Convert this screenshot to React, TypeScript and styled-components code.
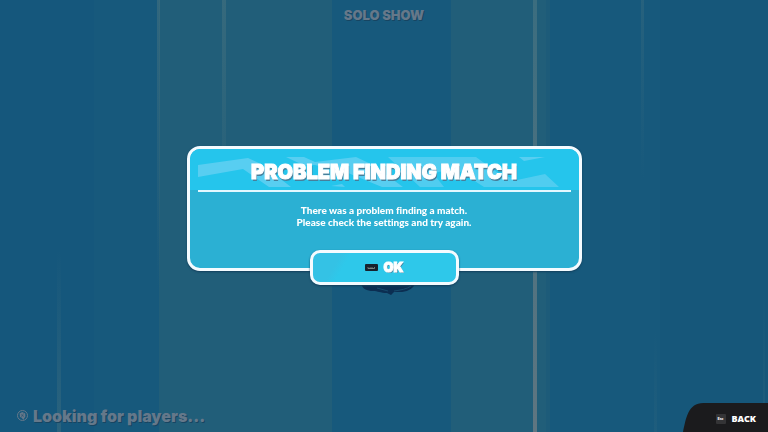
import React from "react";
import styled, { createGlobalStyle, css } from "styled-components";

const GlobalStyle = createGlobalStyle`
  *, *::before, *::after { box-sizing: border-box; }
  body { margin: 0; background: #17597c; }
  button { color: inherit; cursor: pointer; }
`;

const displayFont = css`
  font-family: Inter, "Liberation Sans", sans-serif;
  font-weight: 900;
`;

const bodyFont = css`
  font-family: Lato, "Open Sans", sans-serif;
  font-weight: 900;
  font-variant-ligatures: none;
`;

const Screen = styled.div`
  ${bodyFont}
  position: relative;
  min-height: 100vh;
  display: grid;
  grid-template-rows: auto 1fr auto;
  overflow: hidden;
  background: #17597c;
  color: #fff;
`;

const Scenery = styled.svg`
  position: absolute;
  inset: 0;
  width: 100%;
  height: 100%;
`;

const ShowTitle = styled.h1`
  ${displayFont}
  position: relative;
  margin: 0;
  padding-top: 7px;
  text-align: center;
  font-size: 13px;
  line-height: 16px;
  color: #65788a;
  text-shadow: 1px 1px 0 #174562;
`;

const Footer = styled.footer`
  grid-row: 3;
  position: relative;
  display: flex;
  justify-content: space-between;
  align-items: flex-end;
`;

const Status = styled.p`
  ${displayFont}
  display: flex;
  align-items: center;
  gap: 4px;
  margin: 0;
  padding: 0 0 6px 16px;
  font-size: 16px;
  line-height: 20px;
  color: #65788a;
  text-shadow: 1px 1px 0 #174562;
`;

const BackButton = styled.button`
  ${bodyFont}
  position: relative;
  display: flex;
  align-items: center;
  gap: 6px;
  height: 29px;
  padding: 3px 12px 0 33px;
  border: 0;
  background: none;
  font-family: "Noto Sans", sans-serif;
  font-size: 9px;
  line-height: 12px;
`;

const TabShape = styled.svg`
  position: absolute;
  inset: 0;
  width: 100%;
  height: 100%;
`;

const EscKey = styled.kbd`
  ${bodyFont}
  position: relative;
  width: 10px;
  border-radius: 1px;
  background: #343436;
  font-size: 4px;
  line-height: 10px;
  text-align: center;
`;

const BackLabel = styled.span`
  position: relative;
`;

const Overlay = styled.div`
  position: fixed;
  inset: 0;
  display: grid;
  place-items: center;
  padding: 0 16px 2px;
  pointer-events: none;
`;

const Dialog = styled.section`
  position: relative;
  display: flex;
  flex-direction: column;
  align-items: center;
  width: 100%;
  max-width: 395px;
  pointer-events: auto;
`;

const Panel = styled.div`
  width: 100%;
  min-height: 125px;
  border: 3px solid #f4fbff;
  border-radius: 13px;
  overflow: hidden;
  background: #2bb0d3;
  box-shadow: 0 1px 2px #123f5c;
`;

const PanelHeader = styled.header`
  position: relative;
  display: grid;
  place-items: center;
  height: 41px;
  padding-top: 6px;
  background: #25c5ec;
`;

const Shards = styled.svg`
  position: absolute;
  top: 8px;
  left: 8px;
  width: calc(100% - 16px);
  height: 31px;
`;

const DialogTitle = styled.h2`
  ${displayFont}
  position: relative;
  margin: 0;
  font-size: 20px;
  line-height: 24px;
  white-space: nowrap;
  -webkit-text-stroke: 1px #fff;
  text-shadow: 1px 2px 0 #477f9b;
`;

const Rule = styled.hr`
  position: relative;
  height: 2px;
  margin: 0 8px;
  border: 0;
  background: #e2f8ff;
`;

const Message = styled.p`
  margin: 0;
  padding: 12px 16px 36px;
  text-align: center;
  font-size: 10px;
  line-height: 12px;
`;

const OkButton = styled.button`
  ${displayFont}
  position: relative;
  display: flex;
  align-items: center;
  justify-content: center;
  gap: 6px;
  width: 149px;
  height: 35px;
  margin-top: -21px;
  padding: 0;
  border: 3px solid #f4fbff;
  border-radius: 10px;
  background: linear-gradient(120deg, #34c2e5 0 18%, #2ec8ea 24%);
  box-shadow: 0 1px 2px #123f5c;
  font-size: 13px;
  line-height: 16px;
`;

const OkLabel = styled.span`
  -webkit-text-stroke: 1px #fff;
  text-shadow: 1px 1px 0 #477f9b;
`;

const Contestant = styled.svg`
  position: absolute;
  bottom: -10px;
  left: 50%;
  width: 54px;
  height: 16px;
  margin-left: -23px;
`;

function Backdrop() {
  return (
    <Scenery viewBox="0 0 768 432" preserveAspectRatio="none" aria-hidden="true">
      <defs>
        <linearGradient id="fadeDown" x1="0" y1="0" x2="0" y2="1">
          <stop offset="0" stopColor="#4b7580" stopOpacity=".5" />
          <stop offset="1" stopColor="#4b7580" stopOpacity="0" />
        </linearGradient>
        <linearGradient id="fadeUp" x1="0" y1="1" x2="0" y2="0">
          <stop offset="0" stopColor="#4b7580" stopOpacity=".4" />
          <stop offset="1" stopColor="#4b7580" stopOpacity="0" />
        </linearGradient>
        <linearGradient id="pole" x1="0" y1="0" x2="0" y2="1">
          <stop offset="0" stopColor="#3b6d7f" />
          <stop offset="1" stopColor="#5f7681" />
        </linearGradient>
      </defs>
      <rect width="768" height="432" fill="#17597c" />
      <rect width="94" height="432" fill="#15577c" />
      <rect x="159" width="173" height="432" fill="#215e79" />
      <rect x="451" width="99" height="432" fill="#215e79" />
      <rect x="546" width="4" height="432" fill="#1d5b79" />
      <rect x="660" width="108" height="432" fill="#16577a" />
      <rect x="157" width="3" height="290" fill="url(#fadeDown)" />
      <rect x="222" width="4" height="240" fill="url(#fadeDown)" />
      <rect x="57" y="250" width="4" height="182" fill="url(#fadeUp)" />
      <rect x="533" width="4" height="432" fill="url(#pole)" />
      <rect x="641" width="3" height="180" fill="url(#fadeDown)" opacity=".6" />
      <rect x="654" y="330" width="3" height="102" fill="url(#fadeUp)" opacity=".35" />
      <rect x="763" y="290" width="2" height="142" fill="url(#fadeUp)" opacity=".5" />
    </Scenery>
  );
}

function WheelIcon() {
  return (
    <svg width="13" height="14" viewBox="0 0 13 14" aria-hidden="true">
      <circle cx="6.5" cy="6.5" r="5" fill="none" stroke="#65788a" strokeWidth="1" />
      <path d="M3.6 4.6 6.2 3 9.2 4.5 9.4 7.4 7.2 11 5.8 8.8 4 8Z" fill="#65788a" />
      <path d="M5 5.5 8 7.5M7.5 4.5 5.5 8" stroke="#29536f" strokeWidth=".6" />
    </svg>
  );
}

function EnterKeyIcon() {
  return (
    <svg width="13" height="7" viewBox="0 0 13 7" aria-hidden="true">
      <rect width="13" height="7" rx="1" fill="#17212d" />
      <path d="M3 3V4.5H9.5V3M4.5 4H8" fill="none" stroke="#8b9690" strokeWidth=".8" />
    </svg>
  );
}

export default function App() {
  return (
    <>
      <GlobalStyle />
      <Screen>
        <Backdrop />
        <ShowTitle>SOLO SHOW</ShowTitle>
        <Footer>
          <Status role="status">
            <WheelIcon />
            Looking for players...
          </Status>
          <BackButton type="button">
            <TabShape viewBox="0 0 84 29" preserveAspectRatio="none" aria-hidden="true">
              <path d="M0 29C3 15 5 0 20 0H84V29Z" fill="#1b1b1d" />
            </TabShape>
            <EscKey>Esc</EscKey>
            <BackLabel>BACK</BackLabel>
          </BackButton>
        </Footer>
        <Overlay>
          <Dialog role="dialog" aria-labelledby="dialog-title" aria-describedby="dialog-message">
            <Contestant viewBox="0 0 54 16" aria-hidden="true">
              <path d="M0 4H54C53 9 48 12 41 13L33 13 30 16 26 14C19 14 17 12 12 12 6 12 1 10 0 4Z" fill="#0b2e52" />
              <path d="M33 12C40 11 46 10 50 7M16 9 27 12" fill="none" stroke="#174b6d" strokeWidth="1" />
            </Contestant>
            <Panel>
              <PanelHeader>
                <Shards viewBox="0 0 373 31" preserveAspectRatio="none" aria-hidden="true">
                  <g fill="#58cef1">
                    <path d="M0 8 50 1 63 7 93 30H71L45 12 0 20Z" />
                    <path d="M88 0H106L117 5 158 0 175 8 205 30H184L150 16 117 8 105 8Z" />
                    <path d="M133 29 144 27 147 30Z" />
                    <path d="M190 0H278L300 16 319 23 347 17 361 30H286L258 12 235 16 246 30H222Z" opacity=".85" />
                    <path d="M321 0H347L326 4Z" />
                  </g>
                </Shards>
                <DialogTitle id="dialog-title">PROBLEM FINDING MATCH</DialogTitle>
              </PanelHeader>
              <Rule />
              <Message id="dialog-message">
                There was a problem finding a match.
                <br />
                Please check the settings and try again.
              </Message>
            </Panel>
            <OkButton type="button">
              <EnterKeyIcon />
              <OkLabel>OK</OkLabel>
            </OkButton>
          </Dialog>
        </Overlay>
      </Screen>
    </>
  );
}
